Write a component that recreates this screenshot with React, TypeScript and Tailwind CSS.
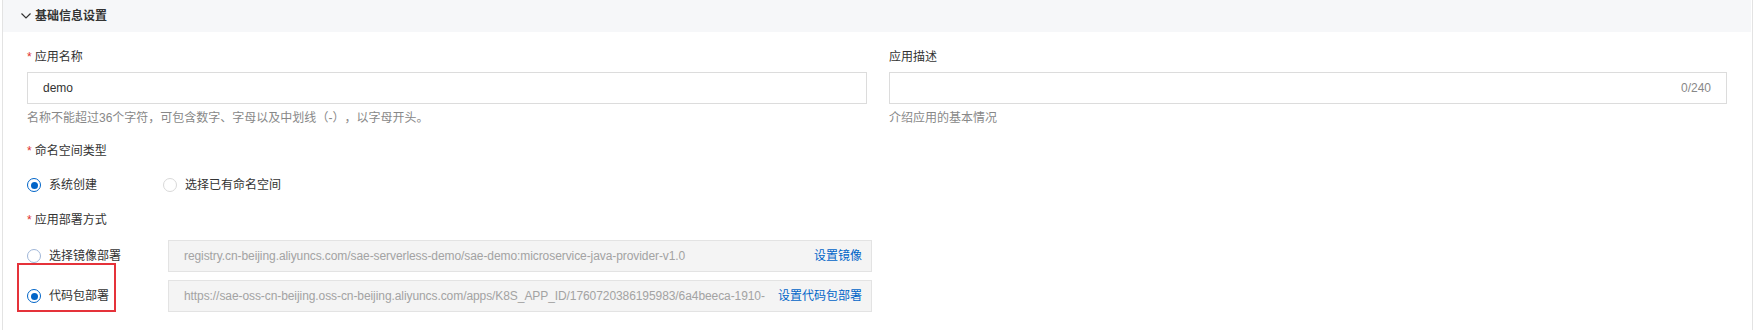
import React from "react";

const font = "font-['Liberation_Sans','Noto_Sans_CJK_SC',sans-serif]";

function Radio({ checked, tone = "gray" }: { checked?: boolean; tone?: "gray" | "blue" }) {
  if (checked) {
    return (
      <span className="flex h-[14px] w-[14px] shrink-0 items-center justify-center rounded-full border-[1.5px] border-[#0064c8] bg-white">
        <span className="h-[7px] w-[7px] rounded-full bg-[#0064c8]" />
      </span>
    );
  }
  return (
    <span
      className={
        tone === "blue"
          ? "h-[14px] w-[14px] shrink-0 rounded-full border border-[#9fb6d8] bg-white"
          : "h-[14px] w-[14px] shrink-0 rounded-full border border-[#d9d9d9] bg-white"
      }
    />
  );
}

function Label({ children, required }: { children: React.ReactNode; required?: boolean }) {
  return (
    <div className="flex h-[20px] items-center text-[12px] text-[#333]">
      {required && <span className="mr-[3px] text-[#e0312d]">*</span>}
      <span>{children}</span>
    </div>
  );
}

function P({ children }: { children: React.ReactNode }) {
  return <span className="inline-block w-[12px]">{children}</span>;
}

export default function App() {
  return (
    <div className={`h-[330px] w-[1754px] bg-white ${font}`}>
      <div className="ml-[2px] h-full w-[1751px] border-x border-[#e3e3e3]">
        <div className="flex h-[32px] w-[1748px] items-center bg-[#f6f7f9] pl-[17px]">
          <svg width="12" height="12" viewBox="0 0 12 12" className="mr-[3px]">
            <polyline points="1.5,3.5 6,8 10.5,3.5" fill="none" stroke="#333" strokeWidth="1.2" />
          </svg>
          <span className="text-[12px] font-bold text-[#333]">基础信息设置</span>
        </div>

        <div className="pl-[24px] pt-[15px]">
          <div className="grid grid-cols-[840px_838px] gap-x-[22px]">
            <div>
              <Label required>应用名称</Label>
              <div className="mt-[5px] flex h-[32px] items-center border border-[#dcdcdc] bg-white px-[15px] text-[12px] text-[#333]">
                demo
              </div>
              <div className="mt-[4px] h-[20px] whitespace-nowrap text-[12px] leading-[20px] text-[#888]">
                名称不能超过36个字符<P>，</P>可包含数字、字母以及中划线<P>（</P>-<P>）</P><P>，</P>以字母开头。
              </div>
            </div>
            <div>
              <Label>应用描述</Label>
              <div className="mt-[5px] flex h-[32px] items-center justify-end border border-[#dcdcdc] bg-white px-[15px] text-[12px] text-[#888]">
                0/240
              </div>
              <div className="mt-[4px] flex h-[20px] items-center text-[12px] text-[#888]">介绍应用的基本情况</div>
            </div>
          </div>

          <div className="mt-[13px]">
            <Label required>命名空间类型</Label>
          </div>
          <div className="mt-[14px] flex h-[20px] items-center text-[12px] text-[#333]">
            <div className="flex w-[136px] items-center gap-[8px]">
              <Radio checked />
              <span>系统创建</span>
            </div>
            <div className="flex items-center gap-[8px]">
              <Radio />
              <span>选择已有命名空间</span>
            </div>
          </div>

          <div className="mt-[15px]">
            <Label required>应用部署方式</Label>
          </div>

          <div className="mt-[10px] flex h-[32px] w-[845px] items-center text-[12px]">
            <div className="flex w-[141px] shrink-0 items-center gap-[8px] text-[#333]">
              <Radio tone="blue" />
              <span>选择镜像部署</span>
            </div>
            <div className="flex h-[32px] flex-1 items-center border border-[#e3e3e3] bg-[#f4f4f4] pl-[15px] pr-[9px]">
              <span className="min-w-0 flex-1 overflow-hidden whitespace-nowrap tracking-[-0.08px] text-[#a3a3a3]">
                registry.cn-beijing.aliyuncs.com/sae-serverless-demo/sae-demo:microservice-java-provider-v1.0
              </span>
              <span className="ml-[8px] shrink-0 text-[#0064c8]">设置镜像</span>
            </div>
          </div>

          <div className="relative mt-[8px] flex h-[32px] w-[845px] items-center text-[12px]">
            <div className="flex w-[141px] shrink-0 items-center gap-[8px] text-[#333]">
              <Radio checked />
              <span>代码包部署</span>
            </div>
            <div className="flex h-[32px] flex-1 items-center border border-[#e3e3e3] bg-[#f4f4f4] pl-[15px] pr-[9px]">
              <span className="min-w-0 flex-1 whitespace-nowrap tracking-[-0.08px] text-[#a3a3a3]">
                https://sae-oss-cn-beijing.oss-cn-beijing.aliyuncs.com/apps/K8S_APP_ID/1760720386195983/6a4beeca-1910-
              </span>
              <span className="ml-[8px] shrink-0 text-[#0064c8]">设置代码包部署</span>
            </div>
            <div className="pointer-events-none absolute left-[-10px] top-[-17px] h-[49px] w-[99px] border-2 border-[#e5323a]" />
          </div>
        </div>
      </div>
    </div>
  );
}
